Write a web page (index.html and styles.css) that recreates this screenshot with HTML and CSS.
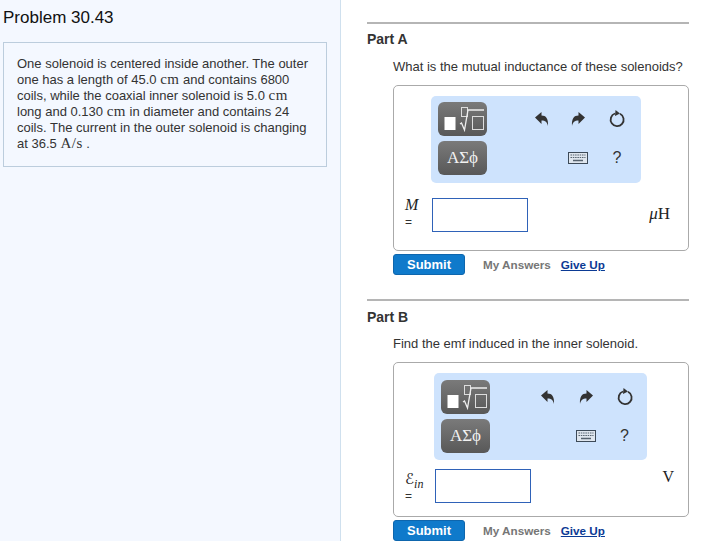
FILE: index.html
```html
<!DOCTYPE html>
<html lang="en">
<head>
<meta charset="utf-8">
<title>Problem 30.43</title>
<link rel="stylesheet" href="styles.css">
</head>
<body>
<div class="page">
  <aside class="sidebar">
    <h1 class="title">Problem 30.43</h1>
    <div class="problem">
      One solenoid is centered inside another. The outer one has a length of 45.0 <span class="unit-text">cm</span> and contains 6800 coils, while the coaxial inner solenoid is 5.0 <span class="unit-text">cm</span> long and 0.130 <span class="unit-text">cm</span> in diameter and contains 24 coils. The current in the outer solenoid is changing at 36.5 <span class="unit-text">A/s</span> .
    </div>
  </aside>
  <main class="content">
    <section class="part part-a">
      <h2 class="part-title">Part A</h2>
      <p class="question">What is the mutual inductance of these solenoids?</p>
      <div class="answer answer-a">
        <div class="toolbar">
          <div class="tool-buttons">
            <div class="tool-btn"><svg width="44" height="26" viewBox="0 0 44 26"><rect x="3.500" y="11" width="11" height="13" fill="#fff"/><rect x="20.500" y="1.500" width="6" height="9" fill="none" stroke="#ddd"/><path d="M19 18l1.500-1 3 7 3.500-20h16" fill="none" stroke="#eee" stroke-width="1.300"/><rect x="31.500" y="10.500" width="11" height="13" fill="none" stroke="#ddd"/></svg></div>
            <div class="tool-btn tool-greek">ΑΣϕ</div>
          </div>
          <div class="tool-icons">
            <svg class="ico" width="16" height="16" viewBox="0 0 16 16"><path d="M1 6.500L7.500 1v3.500c4.500 0 7 3 6.500 10.500-1-4-2.500-5.500-6.500-5.500V13z" fill="#333"/></svg>
            <svg class="ico" width="16" height="16" viewBox="0 0 16 16"><path d="M15 6.500L8.500 1v3.500C4 4.500 1.500 7.500 2 15c1-4 2.500-5.500 6.500-5.500V13z" fill="#333"/></svg>
            <svg class="ico" width="18" height="18" viewBox="0 0 18 18"><path d="M7 3.500a6.500 6.500 0 1 0 5 .3" fill="none" stroke="#333" stroke-width="1.800"/><path d="M7.500 0l4.500 3.500-5 2.500z" fill="#333"/></svg>
            <span class="spacer"></span>
            <svg class="ico" width="20" height="12" viewBox="0 0 20 12"><rect x=".5" y=".5" width="19" height="11" fill="#dfe6ee" stroke="#3d4a58"/><path d="M2.500 3h15M2.500 5.500h15" stroke="#56626e" stroke-width="1.200" stroke-dasharray="1.500 .8"/><path d="M5 8.500h10" stroke="#56626e" stroke-width="1.500"/></svg>
            <span class="help">?</span>
          </div>
        </div>
        <div class="label"><span class="var">M</span><br><span class="eq">=</span></div>
        <div class="input"></div>
        <div class="unit unit-uh"><i>μ</i>H</div>
      </div>
      <div class="actions">
        <button class="submit" type="button">Submit</button>
        <span class="my">My Answers</span>
        <a class="give" href="#">Give Up</a>
      </div>
    </section>
    <section class="part part-b">
      <h2 class="part-title">Part B</h2>
      <p class="question">Find the emf induced in the inner solenoid.</p>
      <div class="answer answer-b">
        <div class="toolbar">
          <div class="tool-buttons">
            <div class="tool-btn"><svg width="44" height="26" viewBox="0 0 44 26"><rect x="3.500" y="11" width="11" height="13" fill="#fff"/><rect x="20.500" y="1.500" width="6" height="9" fill="none" stroke="#ddd"/><path d="M19 18l1.500-1 3 7 3.500-20h16" fill="none" stroke="#eee" stroke-width="1.300"/><rect x="31.500" y="10.500" width="11" height="13" fill="none" stroke="#ddd"/></svg></div>
            <div class="tool-btn tool-greek">ΑΣϕ</div>
          </div>
          <div class="tool-icons">
            <svg class="ico" width="16" height="16" viewBox="0 0 16 16"><path d="M1 6.500L7.500 1v3.500c4.500 0 7 3 6.500 10.500-1-4-2.500-5.500-6.500-5.500V13z" fill="#333"/></svg>
            <svg class="ico" width="16" height="16" viewBox="0 0 16 16"><path d="M15 6.500L8.500 1v3.500C4 4.500 1.500 7.500 2 15c1-4 2.500-5.500 6.500-5.500V13z" fill="#333"/></svg>
            <svg class="ico" width="18" height="18" viewBox="0 0 18 18"><path d="M7 3.500a6.500 6.500 0 1 0 5 .3" fill="none" stroke="#333" stroke-width="1.800"/><path d="M7.500 0l4.500 3.500-5 2.500z" fill="#333"/></svg>
            <span class="spacer"></span>
            <svg class="ico" width="20" height="12" viewBox="0 0 20 12"><rect x=".5" y=".5" width="19" height="11" fill="#dfe6ee" stroke="#3d4a58"/><path d="M2.500 3h15M2.500 5.500h15" stroke="#56626e" stroke-width="1.200" stroke-dasharray="1.500 .8"/><path d="M5 8.500h10" stroke="#56626e" stroke-width="1.500"/></svg>
            <span class="help">?</span>
          </div>
        </div>
        <div class="label"><span class="var var-script">ℰ</span><span class="var"><sub>in</sub></span><br><span class="eq">=</span></div>
        <div class="input"></div>
        <div class="unit unit-v">V</div>
      </div>
      <div class="actions">
        <button class="submit" type="button">Submit</button>
        <span class="my">My Answers</span>
        <a class="give" href="#">Give Up</a>
      </div>
    </section>
  </main>
</div>
</body>
</html>
```

FILE: styles.css
```css
html, body {
  margin: 0;
  padding: 0;
  height: 541px;
  overflow: hidden;
  background: #fff;
  font-family: "Liberation Sans", Arial, sans-serif;
  color: #222;
}
.page {
  display: flex;
  height: 541px;
}
.sidebar {
  width: 324px;
  flex: none;
  background: #f4f8ff;
  border-right: 1px solid #cfe0ee;
  padding: 9px 13px 0 3px;
}
.title {
  margin: 0 0 15px;
  font-size: 17px;
  line-height: 18px;
  font-weight: 400;
  color: #111;
}
.problem {
  border: 1px solid #bccddd;
  padding: 13px 13px 14px 13px;
  font-size: 13px;
  line-height: 16px;
  color: #333;
  height: 96px;
}
.unit-text {
  font-family: "Liberation Serif", serif;
  font-size: 15px;
  line-height: 0;
  letter-spacing: 0.5px;
}
.content {
  width: 322px;
  margin-left: 26px;
  padding-top: 22px;
}
.part {
  border-top: 2px solid #b5b5b5;
}
.part-a {
  height: 275px;
}
.part-title {
  margin: 0;
  padding-top: 7px;
  font-size: 14px;
  line-height: 16px;
  font-weight: 700;
  color: #333;
}
.part-b .part-title {
  padding-top: 8px;
}
.question {
  margin: 12px 0 0 26px;
  font-size: 13px;
  line-height: 16px;
  color: #333;
}
.part-b .question {
  margin-top: 11px;
}
.answer {
  margin: 10px 0 0 26px;
  width: 294px;
  border: 1px solid #aaa;
  border-radius: 5px;
  display: grid;
  grid-template-columns: var(--label) 1fr auto;
  grid-template-rows: auto 1fr;
}
.answer-a {
  --label: 38px;
  --bar: 210px;
  height: 164px;
}
.answer-b {
  --label: 40px;
  --bar: 213px;
  height: 153px;
}
.toolbar {
  grid-column: 2 / 4;
  width: var(--bar);
  height: 87px;
  margin-top: 10px;
  margin-left: -1px;
  background: #cee3fd;
  border-radius: 5px;
  display: flex;
  box-sizing: border-box;
  padding: 6px 0 0 7px;
}
.answer-b .toolbar {
  margin-left: 0;
  padding-top: 7px;
}
.tool-buttons {
  display: flex;
  flex-direction: column;
  gap: 5px;
}
.tool-btn {
  width: 49px;
  height: 34px;
  border-radius: 6px;
  background: linear-gradient(#7a7a7a, #585858);
  display: flex;
  align-items: center;
  justify-content: center;
}
.tool-greek {
  font-family: "Liberation Serif", serif;
  font-size: 17px;
  color: #f2f2f2;
}
.tool-icons {
  display: grid;
  grid-template-columns: 36px 36px 42px;
  grid-template-rows: 34px 34px;
  row-gap: 5px;
  margin-left: 37px;
  justify-items: center;
  align-items: center;
}
.answer-b .tool-icons {
  grid-template-columns: 38px 38px 39px;
  margin-left: 39px;
}
.spacer {
  display: block;
}
.help {
  font-size: 16px;
  color: #333;
}
.label {
  grid-row: 2;
  grid-column: 1;
  padding: 14px 0 0 11px;
  font-size: 14px;
  line-height: 16px;
}
.answer-b .label {
  padding-top: 11px;
}
.var {
  font-family: "Liberation Serif", serif;
  font-style: italic;
  font-size: 16px;
  line-height: 0;
  color: #222;
}
.var-script {
  font-family: "DejaVu Sans", sans-serif;
  font-style: normal;
  font-size: 15px;
}
.var sub {
  font-size: 12px;
  line-height: 0;
}
.eq {
  font-size: 12px;
  line-height: 14px;
  color: #333;
}
.input {
  grid-row: 2;
  grid-column: 2;
  width: 94px;
  height: 32px;
  margin: 15px 0 0 0;
  border: 1px solid #2f62b8;
  background: #fff;
}
.answer-b .input {
  margin: 9px 0 0 1px;
}
.unit {
  grid-row: 2;
  grid-column: 3;
  font-family: "Liberation Serif", serif;
  font-size: 17px;
  line-height: 18px;
  color: #222;
}
.unit-uh {
  padding: 22px 18px 0 0;
}
.unit-v {
  padding: 8px 14px 0 0;
  font-size: 16px;
}
.actions {
  margin: 3px 0 0 26px;
  display: flex;
  align-items: center;
  height: 21px;
}
.submit {
  width: 72px;
  height: 21px;
  padding: 0;
  border: 1px solid #0e66ad;
  border-radius: 3px;
  background: #0f7acb;
  color: #fff;
  font: 700 13px "Liberation Sans", Arial, sans-serif;
}
.my {
  margin-left: 18px;
  font-size: 11.700px;
  font-weight: 700;
  color: #767676;
}
.give {
  margin-left: 10px;
  font-size: 11.700px;
  font-weight: 700;
  color: #0b3a94;
  text-decoration: underline;
}
```
